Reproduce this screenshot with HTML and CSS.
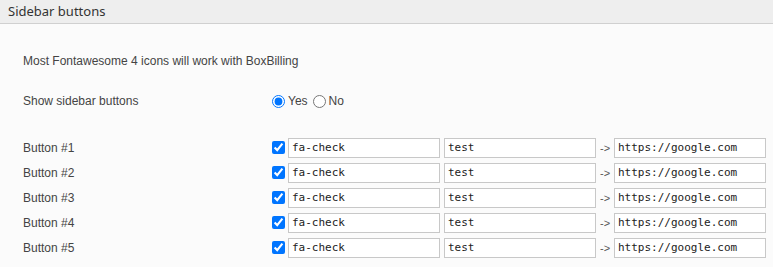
FILE: index.html
```html
<!DOCTYPE html>
<html>
<head>
    <title>Sidebar buttons</title>
    <link rel="stylesheet" href="styles.css">
</head>
<body>
    <div class="panel">
        <div class="panel-head">Sidebar buttons</div>

        <div class="panel-body">
            <p class="intro">Most Fontawesome 4 icons will work with BoxBilling</p>

            <div class="row show-row">
                <label class="row-label">Show sidebar buttons</label>
                <div class="row-field">
                    <input type="radio" name="show" id="showYes" checked><label for="showYes">Yes</label>
                    <input type="radio" name="show" id="showNo"><label for="showNo">No</label>
                </div>
            </div>

            <div class="buttons">
                <div class="row">
                    <label class="row-label">Button #1</label>
                    <div class="row-field">
                        <input type="checkbox" checked>
                        <input type="text" class="txt" value="fa-check">
                        <input type="text" class="txt" value="test">
                        <span class="arrow">-&gt;</span>
                        <input type="text" class="txt" value="https://google.com">
                    </div>
                </div>
                <div class="row">
                    <label class="row-label">Button #2</label>
                    <div class="row-field">
                        <input type="checkbox" checked>
                        <input type="text" class="txt" value="fa-check">
                        <input type="text" class="txt" value="test">
                        <span class="arrow">-&gt;</span>
                        <input type="text" class="txt" value="https://google.com">
                    </div>
                </div>
                <div class="row">
                    <label class="row-label">Button #3</label>
                    <div class="row-field">
                        <input type="checkbox" checked>
                        <input type="text" class="txt" value="fa-check">
                        <input type="text" class="txt" value="test">
                        <span class="arrow">-&gt;</span>
                        <input type="text" class="txt" value="https://google.com">
                    </div>
                </div>
                <div class="row">
                    <label class="row-label">Button #4</label>
                    <div class="row-field">
                        <input type="checkbox" checked>
                        <input type="text" class="txt" value="fa-check">
                        <input type="text" class="txt" value="test">
                        <span class="arrow">-&gt;</span>
                        <input type="text" class="txt" value="https://google.com">
                    </div>
                </div>
                <div class="row">
                    <label class="row-label">Button #5</label>
                    <div class="row-field">
                        <input type="checkbox" checked>
                        <input type="text" class="txt" value="fa-check">
                        <input type="text" class="txt" value="test">
                        <span class="arrow">-&gt;</span>
                        <input type="text" class="txt" value="https://google.com">
                    </div>
                </div>
            </div>
        </div>
    </div>
</body>
</html>
```

FILE: styles.css
```css
body {
    margin: 0;
    background: #fbfbfb;
    font-family: "Liberation Sans", Arial, sans-serif;
    font-size: 12px;
    color: #444;
}

.panel-head {
    height: 23px;
    line-height: 23px;
    padding-left: 8px;
    background: #eeeeee;
    border-bottom: 1px solid #d0d0d0;
    font-family: "Noto Sans", sans-serif;
    font-size: 13px;
    color: #333;
}

.panel-body {
    padding: 27px 0 0 23px;
}

.intro {
    margin: 0;
    height: 20px;
    line-height: 20px;
}

.row {
    display: flex;
    align-items: center;
    height: 25px;
}

.show-row {
    margin-top: 20px;
    height: 20px;
}

.buttons {
    margin-top: 24px;
}

.row-label {
    width: 249px;
}

.row-field {
    display: flex;
    align-items: center;
}

input[type="radio"] {
    margin: 0 3px 0 0;
    width: 13px;
    height: 13px;
}

.row-field label {
    margin-right: 5px;
}

input[type="checkbox"] {
    margin: 0 3px 0 0;
    width: 13px;
    height: 13px;
}

.txt {
    width: 152px;
    height: 20px;
    box-sizing: border-box;
    margin: 0 4px 0 0;
    padding: 0 3px;
    border: 1px solid #c8c8c8;
    background: #fff;
    font-family: "DejaVu Sans Mono", "Liberation Mono", monospace;
    font-size: 11px;
    color: #222;
}

.arrow {
    width: 14px;
    font-size: 11px;
    color: #555;
}
```
